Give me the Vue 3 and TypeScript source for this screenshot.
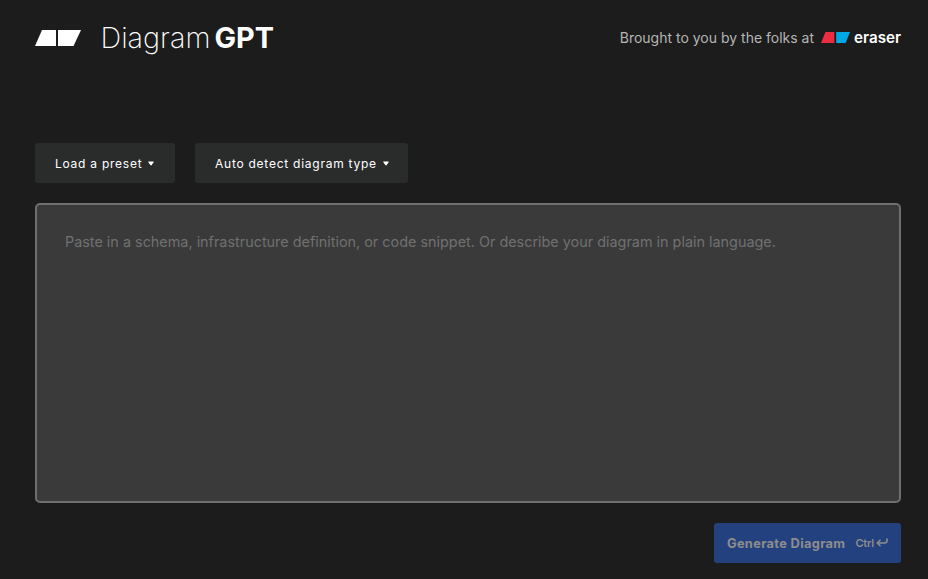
<script setup lang="ts">
import { ref } from 'vue'

const prompt = ref('')
const placeholder =
  'Paste in a schema, infrastructure definition, or code snippet. Or describe your diagram in plain language.'
const menus = ['Load a preset', 'Auto detect diagram type']
</script>

<template>
  <div class="page">
    <header class="header">
      <div class="brand">
        <svg class="logo" width="46" height="16" viewBox="0 0 46 16">
          <path d="M7 0H21V16H0Z" fill="#fff" />
          <path d="M23 0H46L38.5 16H23Z" fill="#fff" />
        </svg>
        <h1 class="title">Diagram<b>GPT</b></h1>
      </div>
      <div class="credit">
        <span>Brought to you by the folks at</span>
        <svg class="eraser-logo" width="29" height="11" viewBox="0 0 29 11">
          <path d="M4.4 0H13.4V11H0Z" fill="#ec2c40" />
          <path d="M15.2 0H29L24.6 11H15.2Z" fill="#00a9e5" />
        </svg>
        <span class="eraser">eraser</span>
      </div>
    </header>

    <main class="main">
      <div class="menus">
        <button v-for="menu in menus" :key="menu" class="menu" type="button">
          {{ menu }}
          <svg width="6" height="5" viewBox="0 0 6 5"><path d="M0.8 1H5.2L3 3.9Z" fill="#fff" stroke="#fff" stroke-linejoin="round" stroke-width="1.1" /></svg>
        </button>
      </div>
      <textarea v-model="prompt" class="prompt" :placeholder="placeholder"></textarea>
      <div class="actions">
        <button class="generate" type="button" disabled>
          <span>Generate Diagram</span>
          <span class="shortcut">
            Ctrl
            <svg width="12" height="10" viewBox="0 0 12 10" fill="none" stroke="currentColor" stroke-width="1.6">
              <path d="M11 0.5V2.5A2.5 2.5 0 0 1 8.5 5H1.5M4.5 1.8L1.3 5L4.5 8.2" />
            </svg>
          </span>
        </button>
      </div>
    </main>
  </div>
</template>

<style>
html,
body {
  margin: 0;
  background: #1c1c1c;
}
</style>

<style scoped>
.page {
  box-sizing: border-box;
  height: 579px;
  padding: 0 27px 0 35px;
  background: #1c1c1c;
  font-family: Inter, "Liberation Sans", sans-serif;
  overflow: hidden;
}

.header {
  display: flex;
  align-items: center;
  justify-content: space-between;
  height: 75px;
}

.brand {
  display: flex;
  align-items: center;
  gap: 19.5px;
}

.title {
  margin: 0;
  color: #fff;
  font-size: 28.8px;
  font-weight: 250;
  line-height: 34px;
}

.title b {
  margin-left: 4px;
  font-weight: 700;
}

.credit {
  display: flex;
  align-items: center;
  color: #b5b5b5;
  font-size: 14px;
}

.eraser-logo {
  margin: 0 4px 0 7px;
}

.eraser {
  color: #fff;
  font-size: 15.2px;
  font-weight: 600;
}

.main {
  padding-top: 68px;
}

.menus {
  display: flex;
  gap: 20px;
}

.menu {
  display: flex;
  align-items: center;
  gap: 6px;
  height: 40px;
  padding: 0 19px 0 20px;
  border: 0;
  border-radius: 3px;
  background: #2a2c2c;
  color: #fff;
  font: 400 12px Inter, "Liberation Sans", sans-serif;
  letter-spacing: 0.75px;
}

.menu:first-child {
  width: 140px;
}

.prompt {
  display: block;
  box-sizing: border-box;
  width: 100%;
  height: 300px;
  margin-top: 20px;
  padding: 27px 28px;
  border: 2px solid #6f6f6f;
  border-radius: 5px;
  background: #3a3a3a;
  color: #fff;
  font: 400 14.4px/20px Inter, "Liberation Sans", sans-serif;
  outline: none;
  resize: none;
}

.prompt::placeholder {
  color: #707070;
  opacity: 1;
}

.actions {
  display: flex;
  justify-content: flex-end;
  margin-top: 20px;
}

.generate {
  display: flex;
  align-items: center;
  gap: 10px;
  height: 40px;
  padding: 0 13px;
  border: 0;
  border-radius: 3px;
  background: #24417f;
  color: #8d8d8d;
  font: 700 12.8px Inter, "Liberation Sans", sans-serif;
  letter-spacing: 0.35px;
}

.shortcut {
  display: flex;
  align-items: center;
  gap: 2px;
  font-size: 11px;
  font-weight: 600;
  letter-spacing: -0.2px;
}
</style>
